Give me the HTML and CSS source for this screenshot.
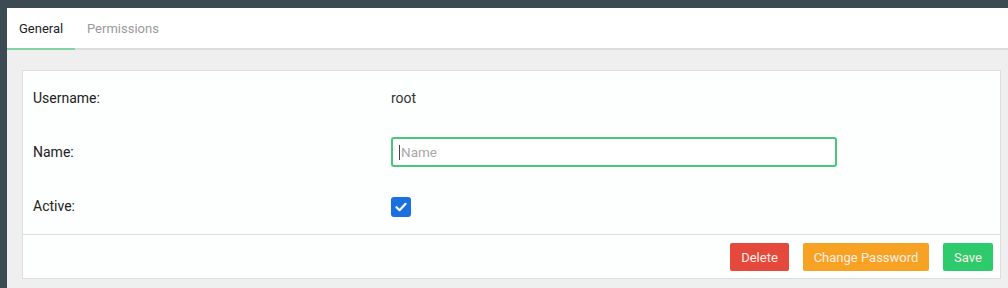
FILE: index.html
```html
<!DOCTYPE html>
<html>
<head>
<meta charset="utf-8">
<link rel="stylesheet" href="styles.css">
</head>
<body>
<div class="panel">
  <div class="tabs">
    <div class="tab active">General</div>
    <div class="tab">Permissions</div>
  </div>
  <div class="content">
    <div class="card">
      <div class="rows">
        <div class="row">
          <div class="label">Username:</div>
          <div class="value">root</div>
        </div>
        <div class="row">
          <div class="label">Name:</div>
          <div class="value"><div class="input"><span class="caret"></span><span class="placeholder">Name</span></div></div>
        </div>
        <div class="row">
          <div class="label">Active:</div>
          <div class="value">
            <span class="checkbox">
              <svg width="14" height="14" viewBox="0 0 14 14"><path d="M2.5 7.2 L5.6 10.2 L11.6 3.8" fill="none" stroke="#fff" stroke-width="2.2" stroke-linecap="round" stroke-linejoin="round"/></svg>
            </span>
          </div>
        </div>
      </div>
      <div class="footer">
        <button class="btn delete">Delete</button>
        <button class="btn change">Change Password</button>
        <button class="btn save">Save</button>
      </div>
    </div>
  </div>
</div>
</body>
</html>
```
FILE: styles.css
```css
html, body {
  margin: 0;
  padding: 0;
  height: 288px;
  overflow: hidden;
  background: #3c4a51;
  font-family: Roboto, "Liberation Sans", sans-serif;
}
.panel {
  margin: 8px 0 0 7px;
  height: 280px;
  background: #eeefee;
}
.tabs {
  display: flex;
  height: 40px;
  background: #ffffff;
  border-bottom: 2px solid #dcdcdc;
}
.tab {
  box-sizing: border-box;
  height: 42px;
  padding: 13px 12px 0 12px;
  font-size: 13px;
  color: #9a9a9a;
}
.tab.active {
  color: #222;
  border-bottom: 2px solid #86d1a3;
  width: 68px;
}
.content {
  padding: 20px 7px 0 15px;
}
.card {
  background: #fdfefe;
  border: 1px solid #dedede;
  height: 207px;
  display: flex;
  flex-direction: column;
}
.rows {
  border-bottom: 1px solid #dedede;
  padding-bottom: 1px;
}
.row {
  display: flex;
  align-items: center;
  height: 54px;
}
.label {
  width: 358px;
  padding-left: 10px;
  font-size: 14px;
  color: #222;
}
.value {
  font-size: 14px;
  color: #333;
}
.input {
  box-sizing: border-box;
  width: 446px;
  height: 30px;
  border: 2px solid #4cc47a;
  border-radius: 3px;
  background: #fff;
  display: flex;
  align-items: center;
  padding-left: 6px;
  font-size: 13.5px;
}
.caret {
  display: inline-block;
  width: 1px;
  height: 15px;
  background: #444;
  margin-right: 1px;
}
.placeholder {
  color: #a8a8a8;
}
.checkbox {
  display: flex;
  align-items: center;
  justify-content: center;
  width: 20px;
  height: 20px;
  border-radius: 3px;
  background: #1b6fdf;
  margin-top: 2px;
}
.footer {
  display: flex;
  justify-content: flex-end;
  gap: 14px;
  padding: 8px 7px 0 0;
}
.btn {
  height: 28px;
  border: none;
  border-radius: 2px;
  color: #fdeee8;
  font-family: Roboto, "Liberation Sans", sans-serif;
  font-size: 13px;
  padding: 0;
}
.delete { background: #e4493b; width: 59px; }
.change { background: #f7a222; width: 126px; }
.save { background: #2ecb6d; width: 50px; }
```
